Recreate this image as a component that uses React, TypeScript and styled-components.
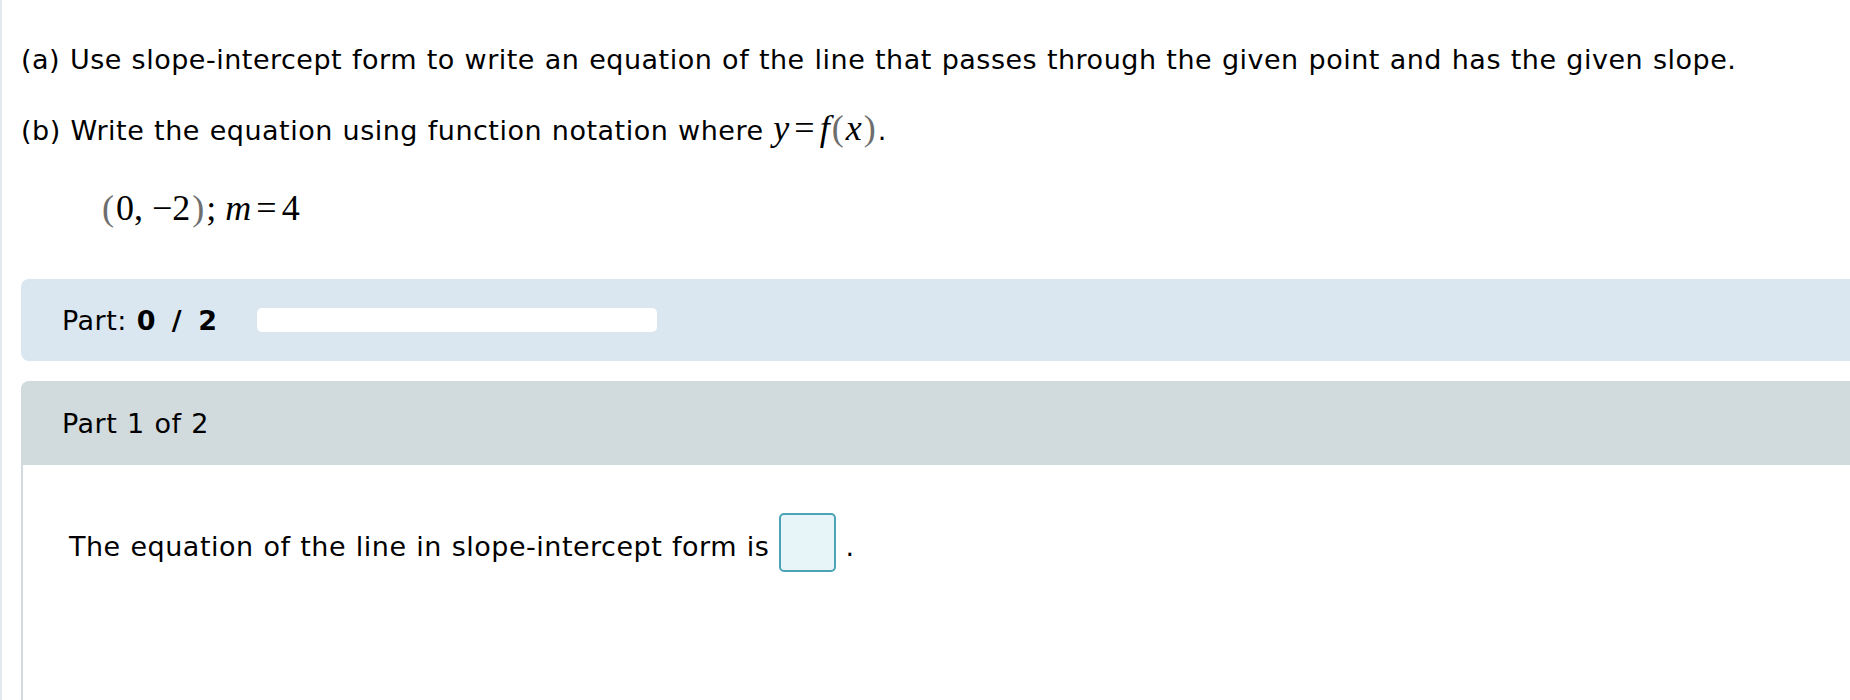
import React from 'react';
import styled, { createGlobalStyle } from 'styled-components';

const GlobalStyle = createGlobalStyle`
  html, body {
    margin: 0;
    padding: 0;
    background: #fff;
    overflow: hidden;
  }
  body {
    font-family: "DejaVu Sans", Verdana, sans-serif;
    font-size: 27px;
    letter-spacing: 0.5px;
    word-spacing: 0.7px;
    color: #000;
  }
`;

const Page = styled.div`
  min-height: 700px;
  border-left: 2px solid #e3e9ec;
  padding-left: 19px;
  padding-top: 44px;
  box-sizing: border-box;
`;

const Prompt = styled.p<{ h?: number }>`
  margin: 0;
  line-height: 32px;
  height: ${(p) => p.h ?? 65}px;
  white-space: nowrap;
`;

const Math = styled.span<{ size?: number }>`
  font-family: "Liberation Serif", "Times New Roman", serif;
  font-size: ${(p) => p.size ?? 36}px;
  letter-spacing: 0;
  word-spacing: 0;
`;

const Var = styled.i`
  font-style: italic;
`;

const Paren = styled.span`
  color: #6e6e6e;
  margin: 0 2px;
`;

const Rel = styled.span`
  margin: 0 5px;
`;

const Given = styled.div`
  padding: 4px 0 0 79px;
  height: 102px;
  box-sizing: border-box;
  line-height: 54px;
`;

const ProgressPanel = styled.div`
  display: flex;
  align-items: center;
  gap: 40px;
  height: 82px;
  margin-right: -20px;
  padding-left: 41px;
  background: #dae7f0;
  border-radius: 8px 0 0 8px;
`;

const Bold = styled.b`
  font-weight: bold;
  word-spacing: 6px;
`;

const Track = styled.div`
  width: 400px;
  height: 24px;
  border-radius: 5px;
  background: #fff;
`;

const Part = styled.section`
  margin-top: 20px;
  margin-right: -20px;
`;

const PartHeader = styled.div`
  display: flex;
  align-items: center;
  height: 84px;
  padding-left: 41px;
  background: #d1dadd;
  border-radius: 8px 0 0 0;
`;

const PartBody = styled.div`
  border-left: 2px solid #d1dadd;
  min-height: 240px;
  padding: 48px 0 0 46px;
`;

const Sentence = styled.div`
  display: flex;
  align-items: center;
  white-space: nowrap;
`;

const AnswerBox = styled.div`
  width: 53px;
  height: 55px;
  margin: 0 9px 8px 10px;
  border: 2px solid #4ba3b6;
  border-radius: 5px;
  background: #e7f5f9;
`;

export default function App() {
  return (
    <>
      <GlobalStyle />
      <Page>
        <Prompt h={68}>
          (a) Use slope-intercept form to write an equation of the line that passes through the given point and has the given slope.
        </Prompt>
        <Prompt>
          (b) Write the equation using function notation where{' '}
          <Math>
            <Var>y</Var>
            <Rel>=</Rel>
            <Var>f</Var>
            <Paren>(</Paren>
            <Var>x</Var>
            <Paren>)</Paren>
          </Math>
          .
        </Prompt>
        <Given>
          <Math>
            <Paren>(</Paren>0, −2<Paren>)</Paren>; <Var>m</Var>
            <Rel>=</Rel>4
          </Math>
        </Given>
        <ProgressPanel>
          <span>
            Part: <Bold>0 / 2</Bold>
          </span>
          <Track />
        </ProgressPanel>
        <Part>
          <PartHeader>Part 1 of 2</PartHeader>
          <PartBody>
            <Sentence>
              The equation of the line in slope-intercept form is
              <AnswerBox />
              <span>.</span>
            </Sentence>
          </PartBody>
        </Part>
      </Page>
    </>
  );
}
